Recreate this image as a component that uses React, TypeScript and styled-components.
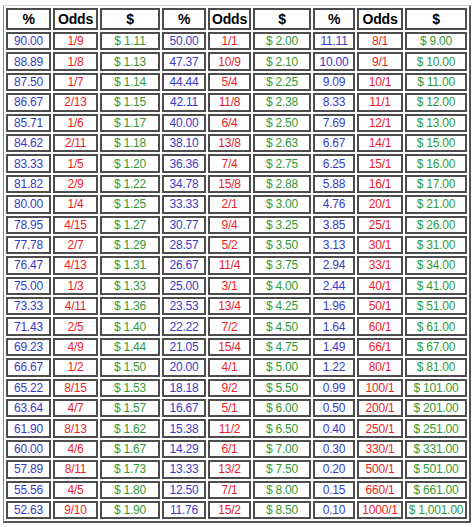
import styled, { createGlobalStyle } from "styled-components";

const GlobalStyle = createGlobalStyle`
  * {
    box-sizing: border-box;
  }
  body {
    margin: 0;
    background: #ffffff;
    font-family: "Liberation Sans", Arial, sans-serif;
  }
`;

const Page = styled.div`
  padding: 5px 0 0 3px;
`;

const Table = styled.table`
  border-collapse: separate;
  border-spacing: 2px;
  border-style: solid;
  border-width: 1px 2px 2px 1px;
  border-color: #cfcfcf #555555 #555555 #8a8a8a;
`;

const HeadCell = styled.th<{ $w: number }>`
  width: ${(p) => p.$w}px;
  height: 22px;
  padding: 0;
  border: 2px solid #4d4d4d;
  font-size: 14px;
  font-weight: bold;
  letter-spacing: -0.2px;
  color: #000000;
  text-align: center;
  vertical-align: middle;
`;

type Tone = "pct" | "odds" | "money";

const toneColor: Record<Tone, string> = {
  pct: "#3a3ac8",
  odds: "#ee1c24",
  money: "#2f9a35",
};

const Cell = styled.td<{ $tone: Tone }>`
  height: 18.4px;
  padding: 0;
  border: 2px solid #4d4d4d;
  font-size: 12px;
  letter-spacing: -0.2px;
  color: ${(p) => toneColor[p.$tone]};
  text-align: center;
  vertical-align: middle;
  white-space: nowrap;
`;

// [percent, odds, payout] for each of the three column groups
const groups: string[][][] = [
  [
    ["90.00", "1/9", "1.11"],
    ["88.89", "1/8", "1.13"],
    ["87.50", "1/7", "1.14"],
    ["86.67", "2/13", "1.15"],
    ["85.71", "1/6", "1.17"],
    ["84.62", "2/11", "1.18"],
    ["83.33", "1/5", "1.20"],
    ["81.82", "2/9", "1.22"],
    ["80.00", "1/4", "1.25"],
    ["78.95", "4/15", "1.27"],
    ["77.78", "2/7", "1.29"],
    ["76.47", "4/13", "1.31"],
    ["75.00", "1/3", "1.33"],
    ["73.33", "4/11", "1.36"],
    ["71.43", "2/5", "1.40"],
    ["69.23", "4/9", "1.44"],
    ["66.67", "1/2", "1.50"],
    ["65.22", "8/15", "1.53"],
    ["63.64", "4/7", "1.57"],
    ["61.90", "8/13", "1.62"],
    ["60.00", "4/6", "1.67"],
    ["57.89", "8/11", "1.73"],
    ["55.56", "4/5", "1.80"],
    ["52.63", "9/10", "1.90"],
  ],
  [
    ["50.00", "1/1", "2.00"],
    ["47.37", "10/9", "2.10"],
    ["44.44", "5/4", "2.25"],
    ["42.11", "11/8", "2.38"],
    ["40.00", "6/4", "2.50"],
    ["38.10", "13/8", "2.63"],
    ["36.36", "7/4", "2.75"],
    ["34.78", "15/8", "2.88"],
    ["33.33", "2/1", "3.00"],
    ["30.77", "9/4", "3.25"],
    ["28.57", "5/2", "3.50"],
    ["26.67", "11/4", "3.75"],
    ["25.00", "3/1", "4.00"],
    ["23.53", "13/4", "4.25"],
    ["22.22", "7/2", "4.50"],
    ["21.05", "15/4", "4.75"],
    ["20.00", "4/1", "5.00"],
    ["18.18", "9/2", "5.50"],
    ["16.67", "5/1", "6.00"],
    ["15.38", "11/2", "6.50"],
    ["14.29", "6/1", "7.00"],
    ["13.33", "13/2", "7.50"],
    ["12.50", "7/1", "8.00"],
    ["11.76", "15/2", "8.50"],
  ],
  [
    ["11.11", "8/1", "9.00"],
    ["10.00", "9/1", "10.00"],
    ["9.09", "10/1", "11.00"],
    ["8.33", "11/1", "12.00"],
    ["7.69", "12/1", "13.00"],
    ["6.67", "14/1", "15.00"],
    ["6.25", "15/1", "16.00"],
    ["5.88", "16/1", "17.00"],
    ["4.76", "20/1", "21.00"],
    ["3.85", "25/1", "26.00"],
    ["3.13", "30/1", "31.00"],
    ["2.94", "33/1", "34.00"],
    ["2.44", "40/1", "41.00"],
    ["1.96", "50/1", "51.00"],
    ["1.64", "60/1", "61.00"],
    ["1.49", "66/1", "67.00"],
    ["1.22", "80/1", "81.00"],
    ["0.99", "100/1", "101.00"],
    ["0.50", "200/1", "201.00"],
    ["0.40", "250/1", "251.00"],
    ["0.30", "330/1", "331.00"],
    ["0.20", "500/1", "501.00"],
    ["0.15", "660/1", "661.00"],
    ["0.10", "1000/1", "1,001.00"],
  ],
];

const widths = [
  [45, 45, 60],
  [44, 43, 58],
  [42, 46, 62],
];

const App = () => {
  const rowCount = groups[0].length;

  return (
    <Page>
      <GlobalStyle />
      <Table>
        <thead>
          <tr>
            {widths.map((w, g) => [
              <HeadCell key={`p${g}`} $w={w[0]}>%</HeadCell>,
              <HeadCell key={`o${g}`} $w={w[1]}>Odds</HeadCell>,
              <HeadCell key={`m${g}`} $w={w[2]}>$</HeadCell>,
            ])}
          </tr>
        </thead>
        <tbody>
          {Array.from({ length: rowCount }, (_, i) => (
            <tr key={i}>
              {groups.map((group, g) => {
                const [pct, odds, money] = group[i];
                return [
                  <Cell key={`p${g}`} $tone="pct">{pct}</Cell>,
                  <Cell key={`o${g}`} $tone="odds">{odds}</Cell>,
                  <Cell key={`m${g}`} $tone="money">$ {money}</Cell>,
                ];
              })}
            </tr>
          ))}
        </tbody>
      </Table>
    </Page>
  );
};

export default App;
